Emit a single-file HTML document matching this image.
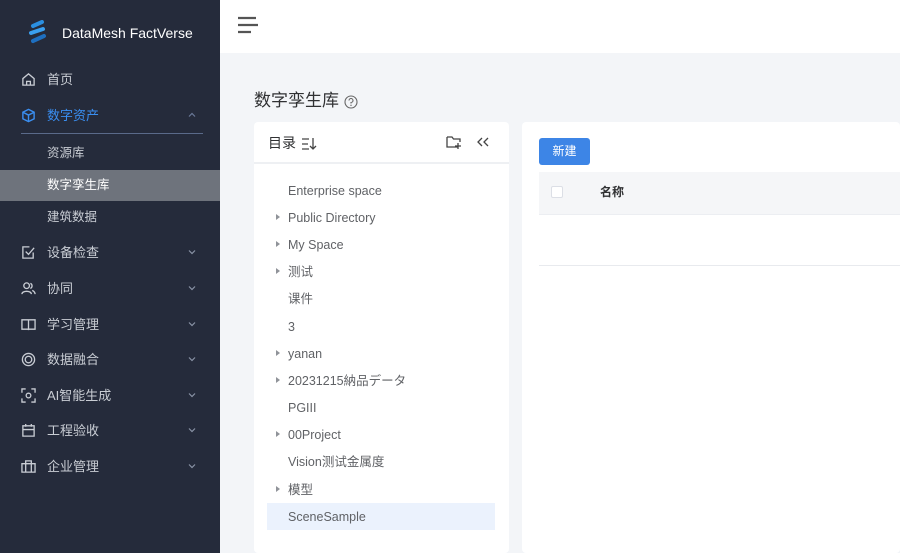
<!DOCTYPE html>
<html><head><meta charset="utf-8"><style>
*{margin:0;padding:0;box-sizing:border-box}
html,body{width:900px;height:553px;overflow:hidden}
body{font-family:"Liberation Sans","Noto Sans CJK SC",sans-serif;background:#f3f5f8;position:relative;line-height:1.2}
.sb{position:absolute;left:0;top:0;width:220px;height:553px;background:#252b3b;color:#c9cdd4}
.logo{position:absolute;left:62px;top:25px;font-size:14px;line-height:16px;color:#fff}
.mi{position:absolute;left:0;width:220px;height:20px;font-size:13px;line-height:20px}
.mi .t{position:absolute;left:47px;top:0}
.mi svg.ic{position:absolute;left:21px;top:2px}
.mi .ch{position:absolute;left:187px;top:4px}
.sub{position:absolute;left:0;width:220px;height:31px;line-height:31px;font-size:12.5px;padding-left:47px}
.top{position:absolute;left:220px;top:0;width:680px;height:53px;background:#fff}
.panel{position:absolute;background:#fff;border-radius:4px}
.tr{position:absolute;left:288px;font-size:12.5px;line-height:14px;height:14px;color:#606266;white-space:nowrap}
.ar{position:absolute;left:276px;width:0;height:0;border-left:4px solid #909399;border-top:3.5px solid transparent;border-bottom:3.5px solid transparent}
</style></head><body>
<div class="sb">
<svg style="position:absolute;left:27px;top:20px" width="22" height="26" viewBox="0 0 22 26"><path d="M6 6 L15 2" stroke="#2b8fe0" stroke-width="4" stroke-linecap="round"/><path d="M4 13 L16 9" stroke="#3aa0f0" stroke-width="4" stroke-linecap="round"/><path d="M6 21 L17 16" stroke="#1e6fc0" stroke-width="4" stroke-linecap="round"/></svg>
<div class="logo">DataMesh FactVerse</div>
<div class="mi" style="top:70px"><svg class="ic" width="15" height="15" viewBox="0 0 16 16" fill="none" stroke="#c9cdd4" stroke-width="1.4"><path d="M2 7 L8 2 L14 7 V14 H2 Z"/><path d="M6 14 V10 H10 V14"/></svg><span class="t">首页</span></div>
<div class="mi" style="top:106px;color:#3a8ef0"><svg class="ic" width="15" height="15" viewBox="0 0 16 16" fill="none" stroke="#3a8ef0" stroke-width="1.5"><path d="M8 1.5 L14 4.5 V11.5 L8 14.5 L2 11.5 V4.5 Z"/><path d="M2 4.5 L8 7.5 L14 4.5 M8 7.5 V14.5"/></svg><span class="t">数字资产</span><svg class="ch" width="10" height="10" viewBox="0 0 10 10"><path d="M2 6.5 L5 3.5 L8 6.5" fill="none" stroke="#6b7a99" stroke-width="1.2"/></svg></div>
<div style="position:absolute;left:21px;top:133px;width:182px;height:1px;background:#5a6a8a"></div>
<div class="sub" style="top:138px">资源库</div>
<div class="sub" style="top:170px;background:#6e737c;color:#fff">数字孪生库</div>
<div class="sub" style="top:202px">建筑数据</div>
<div class="mi" style="top:243px"><svg class="ic" width="15" height="15" viewBox="0 0 16 16" fill="none" stroke="#c9cdd4" stroke-width="1.4"><path d="M13 8 V14 H2 V2 H9"/><path d="M5 7 L8 10 L14 3"/></svg><span class="t">设备检查</span><svg class="ch" width="10" height="10" viewBox="0 0 10 10"><path d="M2 3.5 L5 6.5 L8 3.5" fill="none" stroke="#8a93a6" stroke-width="1.2"/></svg></div>
<div class="mi" style="top:279px"><svg class="ic" width="15" height="15" viewBox="0 0 16 16" fill="none" stroke="#c9cdd4" stroke-width="1.4"><circle cx="6" cy="5" r="3"/><path d="M1 14 C1 10 11 10 11 14"/><path d="M10 2.5 A3 3 0 0 1 10 8 M12 10 C14 11 15 12 15 14"/></svg><span class="t">协同</span><svg class="ch" width="10" height="10" viewBox="0 0 10 10"><path d="M2 3.5 L5 6.5 L8 3.5" fill="none" stroke="#8a93a6" stroke-width="1.2"/></svg></div>
<div class="mi" style="top:315px"><svg class="ic" width="15" height="15" viewBox="0 0 16 16" fill="none" stroke="#c9cdd4" stroke-width="1.4"><path d="M1 3 H15 V13 H1 Z M8 3 V14"/></svg><span class="t">学习管理</span><svg class="ch" width="10" height="10" viewBox="0 0 10 10"><path d="M2 3.5 L5 6.5 L8 3.5" fill="none" stroke="#8a93a6" stroke-width="1.2"/></svg></div>
<div class="mi" style="top:350px"><svg class="ic" width="15" height="15" viewBox="0 0 16 16" fill="none" stroke="#c9cdd4" stroke-width="1.4"><circle cx="8" cy="8" r="6.5"/><circle cx="8" cy="8" r="3.5"/></svg><span class="t">数据融合</span><svg class="ch" width="10" height="10" viewBox="0 0 10 10"><path d="M2 3.5 L5 6.5 L8 3.5" fill="none" stroke="#8a93a6" stroke-width="1.2"/></svg></div>
<div class="mi" style="top:386px"><svg class="ic" width="15" height="15" viewBox="0 0 16 16" fill="none" stroke="#c9cdd4" stroke-width="1.4"><path d="M1 5 V1 H5 M11 1 H15 V5 M15 11 V15 H11 M5 15 H1 V11"/><circle cx="8" cy="8" r="2.5"/></svg><span class="t">AI智能生成</span><svg class="ch" width="10" height="10" viewBox="0 0 10 10"><path d="M2 3.5 L5 6.5 L8 3.5" fill="none" stroke="#8a93a6" stroke-width="1.2"/></svg></div>
<div class="mi" style="top:421px"><svg class="ic" width="15" height="15" viewBox="0 0 16 16" fill="none" stroke="#c9cdd4" stroke-width="1.4"><path d="M2 3 H14 V14 H2 Z M2 7 H14 M5 1 V4 M11 1 V4"/></svg><span class="t">工程验收</span><svg class="ch" width="10" height="10" viewBox="0 0 10 10"><path d="M2 3.5 L5 6.5 L8 3.5" fill="none" stroke="#8a93a6" stroke-width="1.2"/></svg></div>
<div class="mi" style="top:457px"><svg class="ic" width="15" height="15" viewBox="0 0 16 16" fill="none" stroke="#c9cdd4" stroke-width="1.4"><path d="M1 5 H15 V14 H1 Z M5 5 V2 H11 V5 M5 5 V14 M11 5 V14"/></svg><span class="t">企业管理</span><svg class="ch" width="10" height="10" viewBox="0 0 10 10"><path d="M2 3.5 L5 6.5 L8 3.5" fill="none" stroke="#8a93a6" stroke-width="1.2"/></svg></div>
</div>
<div class="top"><svg style="position:absolute;left:17px;top:16px" width="22" height="18"><path d="M1 2 H19 M1 9 H21 M1 16 H14" stroke="#555" stroke-width="2.2"/></svg></div>
<div style="position:absolute;left:254px;top:91px;font-size:17px;line-height:20px;color:#303133">数字孪生库</div>
<svg style="position:absolute;left:344px;top:95px" width="14" height="14" viewBox="0 0 14 14"><circle cx="7" cy="7" r="6" fill="none" stroke="#666" stroke-width="1.1"/><path d="M5 5.5 A2 2 0 1 1 7 7.5 V8.5" fill="none" stroke="#666" stroke-width="1.1"/><circle cx="7" cy="10.3" r=".7" fill="#666"/></svg>
<div class="panel" style="left:254px;top:122px;width:255px;height:431px">
<div style="position:absolute;left:14px;top:13px;font-size:14px;line-height:16px;color:#303133">目录</div>
<svg style="position:absolute;left:47px;top:15px" width="16" height="14"><path d="M1 2 H8 M1 7 H7 M1 12 H8 M12 1 V12 M9 9 L12 12 L15 9" fill="none" stroke="#444" stroke-width="1.3"/></svg>
<svg style="position:absolute;left:192px;top:13px" width="16" height="15"><path d="M1 2 H6 L7.5 4 H14 V7 M12 12 H1 V2" fill="none" stroke="#444" stroke-width="1.3"/><path d="M12 8 V14 M9 11 H15" stroke="#444" stroke-width="1.3"/></svg>
<svg style="position:absolute;left:223px;top:15px" width="12" height="10"><path d="M5 1 L1 5 L5 9 M11 1 L7 5 L11 9" fill="none" stroke="#444" stroke-width="1.3"/></svg>
<div style="position:absolute;left:0;top:40px;width:255px;height:2px;background:#eef0f3"></div>
</div>
<div style="position:absolute;left:267px;top:503px;width:228px;height:27px;background:#ebf2fd"></div>
<div class="tr" style="top:184px">Enterprise space</div>
<div class="ar" style="top:214px"></div><div class="tr" style="top:211px">Public Directory</div>
<div class="ar" style="top:241px"></div><div class="tr" style="top:238px">My Space</div>
<div class="ar" style="top:268px"></div><div class="tr" style="top:265px">测试</div>
<div class="tr" style="top:292px">课件</div>
<div class="tr" style="top:320px">3</div>
<div class="ar" style="top:350px"></div><div class="tr" style="top:347px">yanan</div>
<div class="ar" style="top:377px"></div><div class="tr" style="top:374px">20231215納品データ</div>
<div class="tr" style="top:401px">PGIII</div>
<div class="ar" style="top:431px"></div><div class="tr" style="top:428px">00Project</div>
<div class="tr" style="top:455px">Vision测试金属度</div>
<div class="ar" style="top:486px"></div><div class="tr" style="top:483px">模型</div>
<div class="tr" style="top:510px">SceneSample</div>
<div class="panel" style="left:522px;top:122px;width:378px;height:431px">
<div style="position:absolute;left:17px;top:16px;width:51px;height:27px;background:#3d85e6;border-radius:3px;color:#fff;font-size:12px;line-height:27px;text-align:center">新建</div>
<div style="position:absolute;left:17px;top:50px;width:361px;height:43px;background:#f5f6f8;border-bottom:1px solid #eceef2"></div>
<div style="position:absolute;left:29px;top:64px;width:12px;height:12px;border:1px solid #dcdfe6;border-radius:2px;background:#fff"></div>
<div style="position:absolute;left:78px;top:63px;font-size:12px;line-height:14px;font-weight:bold;color:#303133">名称</div>
<div style="position:absolute;left:17px;top:143px;width:361px;height:1px;background:#e8eaee"></div>
</div>
</body></html>
